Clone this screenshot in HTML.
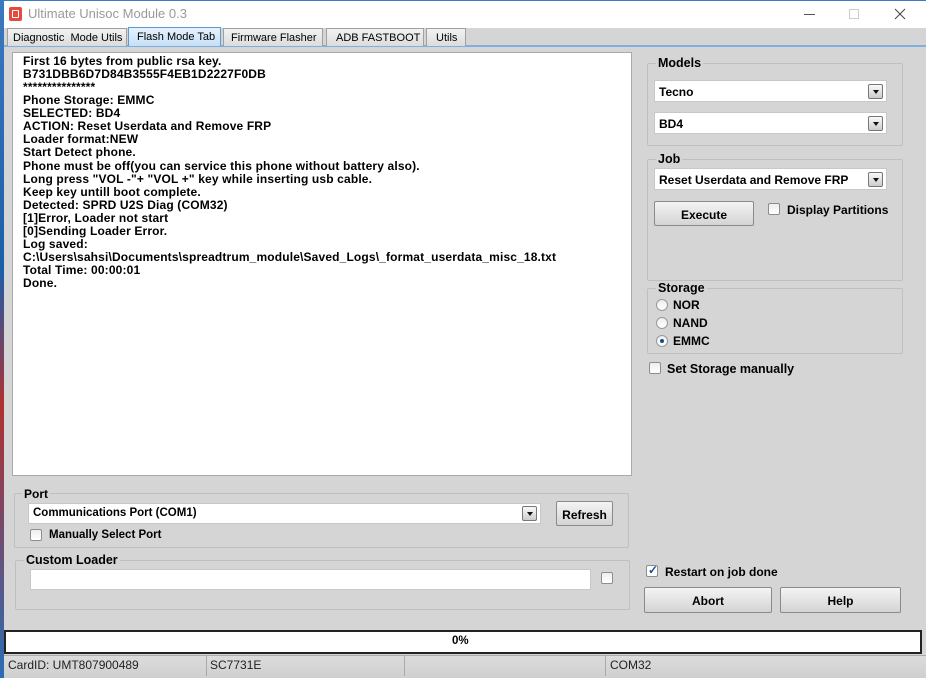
<!DOCTYPE html>
<html><head><meta charset="utf-8"><style>
*{box-sizing:border-box;margin:0;padding:0}
body{width:926px;height:678px;overflow:hidden;background:#2a6db5;font-family:"Liberation Sans",sans-serif;position:relative}
.a{position:absolute;white-space:nowrap}
.win{left:4px;top:0;width:922px;height:678px;background:#d5d5d5}
.title{left:4px;top:0;width:922px;height:28px;background:#fff;border-top:1px solid #3a7bc8}
.b{font-weight:bold;font-size:12px;color:#000}
.grp{border:1px solid #bfbfbf;border-radius:2px}
.lg{background:#d5d5d5;padding:0 2px;font-weight:bold;font-size:12.5px}
.combo{background:#fff;border:1px solid #c8c8c8;height:22px;font-weight:bold;font-size:12px;padding:4px 0 0 4px}
.arr{position:absolute;right:3px;top:3px;width:15px;height:15px;border:1px solid #777;border-radius:2px;background:linear-gradient(#fafafa,#ccc)}
.arr:after{content:"";position:absolute;left:4px;top:5px;border-left:3px solid transparent;border-right:3px solid transparent;border-top:4px solid #111}
.btn{border:1px solid #8a8a8a;border-radius:2px;background:linear-gradient(#f4f4f4,#d4d4d4);font-weight:bold;font-size:12px;text-align:center}
.cb{width:12px;height:12px;border:1px solid #8d8d8d;border-radius:2px;background:linear-gradient(#eee,#fff)}
.rd{width:12px;height:12px;border:1px solid #999;border-radius:50%;background:linear-gradient(#eee,#fff)}
.tab{top:28px;height:18px;border:1px solid #a0a0a0;border-bottom:none;background:linear-gradient(#f2f2f2,#dcdcdc);font-size:11px;padding:3px 0 0 5px;color:#000;overflow:hidden}
</style></head><body>
<div class="a" style="left:0;top:0;width:4px;height:678px;background:linear-gradient(#3b78c0,#1c5ea8 40%,#b03030 60%,#2a6db5)"></div>
<div class="a win"></div>
<div class="a title"></div>
<div class="a" style="left:9px;top:7px;width:13px;height:14px;background:#e44b3d;border-radius:2px"><div class="a" style="left:3px;top:3px;width:7px;height:8px;border:1.5px solid #fff;border-radius:1px"></div></div>
<div class="a" style="left:28px;top:6px;font-size:13px;color:#9a9a9a">Ultimate Unisoc Module 0.3</div>
<div class="a" style="left:804px;top:14px;width:11px;height:1px;background:#555"></div>
<div class="a" style="left:849px;top:9px;width:10px;height:10px;border:1px solid #ccc"></div>
<svg class="a" style="left:894px;top:8px" width="12" height="12"><path d="M1 1L11 11M11 1L1 11" stroke="#444" stroke-width="1"/></svg>
<div class="a" style="left:4px;top:45px;width:922px;height:2px;background:#7fb0e0"></div>
<div class="a tab" style="left:7px;width:120px">Diagnostic&nbsp; Mode Utils</div>
<div class="a tab" style="left:128px;top:27px;width:93px;height:19px;background:linear-gradient(#e6f2fc,#c6e0f7);border-color:#5a9ad5;padding-left:8px">Flash Mode Tab</div>
<div class="a tab" style="left:223px;width:100px;padding-left:7px">Firmware Flasher</div>
<div class="a tab" style="left:326px;width:98px;padding-left:9px">ADB FASTBOOT</div>
<div class="a tab" style="left:426px;width:40px;padding-left:9px">Utils</div>

<div class="a" style="left:12px;top:52px;width:620px;height:424px;background:#fff;border:1px solid #aaa"></div>
<div class="a b" style="left:23px;top:55px;line-height:13.06px;font-size:12px;letter-spacing:0.15px;white-space:pre">First 16 bytes from public rsa key.
B731DBB6D7D84B3555F4EB1D2227F0DB
***************
Phone Storage: EMMC
SELECTED: BD4
ACTION: Reset Userdata and Remove FRP
Loader format:NEW
Start Detect phone.
Phone must be off(you can service this phone without battery also).
Long press "VOL -"+ "VOL +" key while inserting usb cable.
Keep key untill boot complete.
Detected: SPRD U2S Diag (COM32)
[1]Error, Loader not start
[0]Sending Loader Error.
Log saved:
C:\Users\sahsi\Documents\spreadtrum_module\Saved_Logs\_format_userdata_misc_18.txt
Total Time: 00:00:01
Done.</div>

<div class="a grp" style="left:647px;top:63px;width:256px;height:83px"></div>
<div class="a lg" style="left:656px;top:56px">Models</div>
<div class="a combo" style="left:654px;top:80px;width:233px">Tecno<div class="arr"></div></div>
<div class="a combo" style="left:654px;top:112px;width:233px">BD4<div class="arr"></div></div>
<div class="a grp" style="left:647px;top:159px;width:256px;height:122px"></div>
<div class="a lg" style="left:656px;top:152px">Job</div>
<div class="a combo" style="left:654px;top:168px;width:233px">Reset Userdata and Remove FRP<div class="arr"></div></div>
<div class="a btn" style="left:654px;top:201px;width:100px;height:25px;padding-top:6px">Execute</div>
<div class="a cb" style="left:768px;top:203px"></div>
<div class="a b" style="left:787px;top:203px">Display Partitions</div>
<div class="a grp" style="left:647px;top:288px;width:256px;height:66px"></div>
<div class="a lg" style="left:656px;top:281px">Storage</div>
<div class="a rd" style="left:656px;top:299px"></div><div class="a b" style="left:673px;top:298px">NOR</div>
<div class="a rd" style="left:656px;top:317px"></div><div class="a b" style="left:673px;top:316px">NAND</div>
<div class="a rd" style="left:656px;top:335px"><div class="a" style="left:3px;top:3px;width:4px;height:4px;border-radius:50%;background:#1a4d8c"></div></div><div class="a b" style="left:673px;top:334px">EMMC</div>
<div class="a cb" style="left:649px;top:362px"></div><div class="a b" style="left:667px;top:362px;font-size:12.5px">Set Storage manually</div>

<div class="a grp" style="left:14px;top:493px;width:615px;height:55px"></div>
<div class="a lg" style="left:22px;top:487px;font-size:12px">Port</div>
<div class="a combo" style="left:28px;top:503px;width:513px;height:21px;font-size:11.5px;padding-top:3px">Communications Port (COM1)<div class="arr" style="top:2px"></div></div>
<div class="a btn" style="left:556px;top:501px;width:57px;height:25px;padding-top:6px">Refresh</div>
<div class="a cb" style="left:30px;top:529px"></div><div class="a b" style="left:49px;top:529px;font-size:11.5px">Manually Select Port</div>
<div class="a grp" style="left:15px;top:560px;width:615px;height:50px"></div>
<div class="a lg" style="left:24px;top:553px">Custom Loader</div>
<div class="a" style="left:30px;top:569px;width:561px;height:21px;background:#fff;border:1px solid #c8c8c8"></div>
<div class="a cb" style="left:601px;top:572px"></div>
<div class="a cb" style="left:646px;top:565px;background:#fff"><div class="a" style="left:1px;top:-3px;font-size:12px;color:#1b4f9a;font-weight:bold">✓</div></div>
<div class="a b" style="left:665px;top:565px">Restart on job done</div>
<div class="a btn" style="left:644px;top:587px;width:128px;height:26px;padding-top:6px">Abort</div>
<div class="a btn" style="left:780px;top:587px;width:121px;height:26px;padding-top:6px">Help</div>

<div class="a" style="left:4px;top:630px;width:918px;height:24px;background:#fff;border:2px solid #222"></div>
<div class="a b" style="left:452px;top:635px;font-size:11.5px">0%</div>
<div class="a" style="left:4px;top:655px;width:922px;height:23px;background:linear-gradient(#dcdcdc,#cfcfcf);border-top:1px solid #aaa"></div>
<div class="a" style="left:8px;top:658px;font-size:12px;color:#222">CardID: UMT807900489</div>
<div class="a" style="left:206px;top:656px;width:1px;height:20px;background:#aaa"></div>
<div class="a" style="left:210px;top:658px;font-size:12px;color:#222">SC7731E</div>
<div class="a" style="left:404px;top:656px;width:1px;height:20px;background:#aaa"></div>
<div class="a" style="left:605px;top:656px;width:1px;height:20px;background:#aaa"></div>
<div class="a" style="left:610px;top:658px;font-size:12px;color:#222">COM32</div>
</body></html>
